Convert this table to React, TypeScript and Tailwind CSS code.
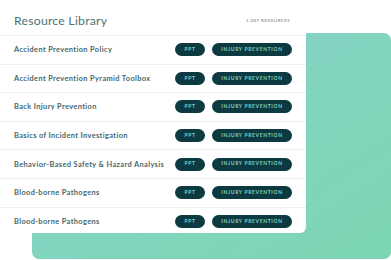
import React from 'react';

const resources = [
  'Accident Prevention Policy',
  'Accident Prevention Pyramid Toolbox',
  'Back Injury Prevention',
  'Basics of Incident Investigation',
  'Behavior-Based Safety & Hazard Analysis',
  'Blood-borne Pathogens',
  'Blood-borne Pathogens',
];

function Pill({ label, width }: { label: string; width: string }) {
  return (
    <span
      className={`${width} h-[13px] rounded-full bg-[#0c3a40] text-[#7fd3c0] text-[5px] font-bold tracking-[0.65px] flex items-center justify-center`}
    >
      {label}
    </span>
  );
}

export default function App() {
  return (
    <div className="relative w-[391px] h-[260px] bg-white overflow-hidden font-['Lato',sans-serif]">
      {/* Backdrop panel */}
      <div className="absolute left-[32px] top-[33px] right-0 bottom-[1px] rounded-[7px] bg-gradient-to-br from-[#88d3cc] to-[#7cd6b2]" />

      {/* Card */}
      <div className="relative w-[306px] h-[233px] bg-white rounded-br-[6px] flex flex-col">
        <div className="h-[36px] shrink-0 flex items-center justify-between pt-[8px] pl-[14px] pr-[16px] border-b-[1.5px] border-[#eeeeee]">
          <span className="text-[12.3px] text-[#4f7275] tracking-[0.2px]">Resource Library</span>
          <span className="text-[4.3px] text-[#7d8d8f] tracking-[0.5px] font-semibold">1,007 RESOURCES</span>
        </div>
        {resources.map((name, i) => (
          <div
            key={i}
            className={`h-[28.6px] shrink-0 flex items-center pl-[14px] ${i < resources.length - 1 ? 'border-b-[1.5px] border-[#eeeeee]' : ''}`}
          >
            <span className="w-[161px] text-[7.4px] font-bold text-[#46676b] tracking-[0.38px]">{name}</span>
            <div className="flex items-center gap-[7px]">
              <Pill label="PPT" width="w-[30px]" />
              <Pill label="INJURY PREVENTION" width="w-[80px]" />
            </div>
          </div>
        ))}
      </div>
    </div>
  );
}
